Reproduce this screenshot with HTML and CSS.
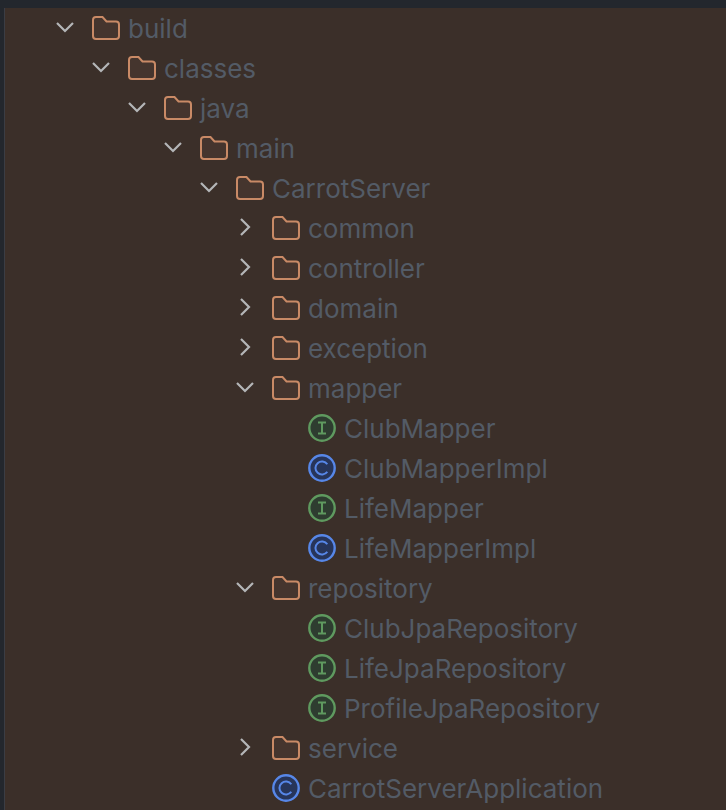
FILE: index.html
```html
<!DOCTYPE html>
<html lang="en">
  <head>
    <meta charset="UTF-8" />
    <title>Project tree</title>
    <link rel="stylesheet" href="styles.css">
  </head>
  <body>
    <svg class="defs" width="0" height="0">
      <symbol id="open" viewBox="0 0 24 24"><path d="M4 8l8 8 8-8" /></symbol>
      <symbol id="closed" viewBox="0 0 24 24"><path d="M8 4l8 8-8 8" /></symbol>
      <symbol id="folder" viewBox="0 0 28 24">
        <path d="M1 4a3 3 0 0 1 3-3h6.500l4 4.500H24a3 3 0 0 1 3 3V20a3 3 0 0 1-3 3H4a3 3 0 0 1-3-3z" />
      </symbol>
      <symbol id="iface" viewBox="0 0 28 28">
        <circle cx="14" cy="14" r="12.700" />
        <path class="glyph" d="M10 8.500h8M10 19.500h8M14 8.500v11" />
      </symbol>
      <symbol id="klass" viewBox="0 0 28 28">
        <circle cx="14" cy="14" r="12.700" />
        <path class="glyph" d="M19.300 10.300a6.500 6.500 0 1 0 0 7.400" />
      </symbol>
    </svg>
    <div id="container">
      <ul class="tree">
        <li>
          <div class="row"><svg class="arrow"><use href="#open" /></svg><svg class="icon folder"><use href="#folder" /></svg><span>build</span></div>
          <ul>
            <li>
              <div class="row"><svg class="arrow"><use href="#open" /></svg><svg class="icon folder"><use href="#folder" /></svg><span>classes</span></div>
              <ul>
                <li>
                  <div class="row"><svg class="arrow"><use href="#open" /></svg><svg class="icon folder"><use href="#folder" /></svg><span>java</span></div>
                  <ul>
                    <li>
                      <div class="row"><svg class="arrow"><use href="#open" /></svg><svg class="icon folder"><use href="#folder" /></svg><span>main</span></div>
                      <ul>
                        <li>
                          <div class="row"><svg class="arrow"><use href="#open" /></svg><svg class="icon folder"><use href="#folder" /></svg><span>CarrotServer</span></div>
                          <ul>
                            <li><div class="row"><svg class="arrow"><use href="#closed" /></svg><svg class="icon folder"><use href="#folder" /></svg><span>common</span></div></li>
                            <li><div class="row"><svg class="arrow"><use href="#closed" /></svg><svg class="icon folder"><use href="#folder" /></svg><span>controller</span></div></li>
                            <li><div class="row"><svg class="arrow"><use href="#closed" /></svg><svg class="icon folder"><use href="#folder" /></svg><span>domain</span></div></li>
                            <li><div class="row"><svg class="arrow"><use href="#closed" /></svg><svg class="icon folder"><use href="#folder" /></svg><span>exception</span></div></li>
                            <li>
                              <div class="row"><svg class="arrow"><use href="#open" /></svg><svg class="icon folder"><use href="#folder" /></svg><span>mapper</span></div>
                              <ul>
                                <li><div class="row file"><svg class="icon iface"><use href="#iface" /></svg><span>ClubMapper</span></div></li>
                                <li><div class="row file"><svg class="icon klass"><use href="#klass" /></svg><span>ClubMapperImpl</span></div></li>
                                <li><div class="row file"><svg class="icon iface"><use href="#iface" /></svg><span>LifeMapper</span></div></li>
                                <li><div class="row file"><svg class="icon klass"><use href="#klass" /></svg><span>LifeMapperImpl</span></div></li>
                              </ul>
                            </li>
                            <li>
                              <div class="row"><svg class="arrow"><use href="#open" /></svg><svg class="icon folder"><use href="#folder" /></svg><span>repository</span></div>
                              <ul>
                                <li><div class="row file"><svg class="icon iface"><use href="#iface" /></svg><span>ClubJpaRepository</span></div></li>
                                <li><div class="row file"><svg class="icon iface"><use href="#iface" /></svg><span>LifeJpaRepository</span></div></li>
                                <li><div class="row file"><svg class="icon iface"><use href="#iface" /></svg><span>ProfileJpaRepository</span></div></li>
                              </ul>
                            </li>
                            <li><div class="row"><svg class="arrow"><use href="#closed" /></svg><svg class="icon folder"><use href="#folder" /></svg><span>service</span></div></li>
                            <li><div class="row file"><svg class="icon klass"><use href="#klass" /></svg><span>CarrotServerApplication</span></div></li>
                          </ul>
                        </li>
                      </ul>
                    </li>
                  </ul>
                </li>
              </ul>
            </li>
          </ul>
        </li>
      </ul>
    </div>
  </body>
</html>
```

FILE: styles.css
```css
html {
  height: 100%;
}
body {
  height: 100%;
  margin: 0;
  overflow: hidden;
  background-color: #23272d;
}

.defs {
  position: absolute;
}

#container {
  height: 802px;
  margin-top: 8px;
  margin-left: 4px;
  border-left: 1px solid #3b3d44;
  background-color: #3b2f29;
  overflow: hidden;

  font-family: Inter, "Liberation Sans", sans-serif;
  font-size: 26px;
  color: #535b66;
}

ul {
  list-style: none;
  margin: 0;
  padding: 0 0 0 36px;
}

.tree {
  padding-left: 42px;
}

.row {
  display: flex;
  align-items: center;
  height: 40px;
  white-space: nowrap;
}

.row span {
  margin-left: -1px;
}

/* ファイルは矢印がない分ずらす */
.row.file {
  padding-left: 36px;
}

.arrow {
  width: 24px;
  height: 24px;
  margin: -2px 6px 0 6px;
  flex: none;
  fill: none;
  stroke: #b4b6b8;
  stroke-width: 2.200;
}

.icon {
  margin: 0 9px;
  flex: none;
}

.folder {
  width: 28px;
  height: 24px;
  fill: #45352e;
  stroke: #c98a66;
  stroke-width: 2;
}

.iface,
.klass {
  width: 28px;
  height: 28px;
  stroke-width: 2.400;
}

.iface {
  fill: #2e3d30;
  stroke: #5f9a5f;
}

.klass {
  fill: #27355a;
  stroke: #5787e8;
}

.glyph {
  fill: none;
  stroke-width: 2;
}
```
